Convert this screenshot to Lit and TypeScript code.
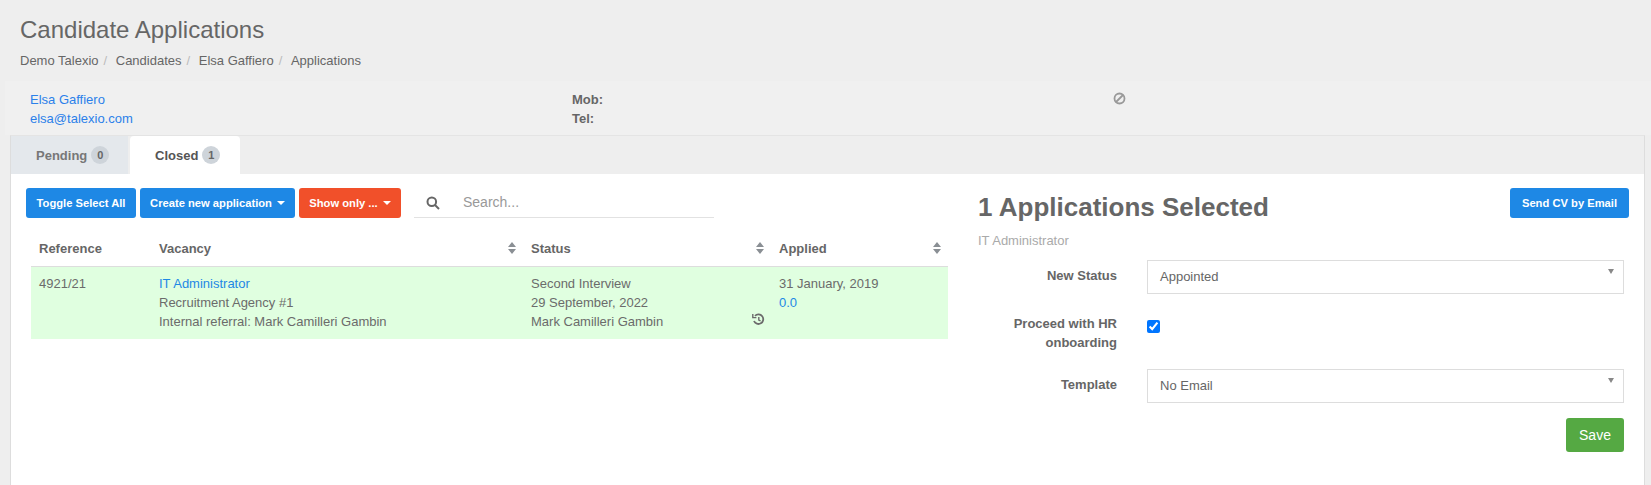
import { LitElement, html, css } from "lit";
import { customElement } from "lit/decorators.js";

const sort = html`<svg class="sort" width="10" height="14" viewBox="0 0 10 14"><path d="M5 1 9 6H1ZM1 8h8L5 13Z" fill="#8a8f94"/></svg>`;
const caret = html`<span class="caret"></span>`;

@customElement("app-root")
export class AppRoot extends LitElement {
  static styles = css`
    :host { display: block; height: 485px; overflow: hidden; background: #eee; font: 13px/19px "Liberation Sans", Arial, sans-serif; color: #666; }
    * { box-sizing: border-box; }
    a { color: #1e88e5; text-decoration: none; }
    header { height: 81px; padding: 16px 0 0 20px; }
    h1 { margin: 0; font-size: 24px; line-height: 28px; font-weight: 400; color: #666; }
    .crumbs { display: flex; margin-top: 7px; color: #666; }
    .crumbs span + span::before { content: "/"; color: #bbb; padding: 0 8.6px 0 5px; }
    .strip { margin-left: 5px; height: 54px; padding: 9px 0 0 25px; background: #f0f0f0; display: grid; grid-template-columns: 542px 541px 1fr; }
    .strip a { color: #2b80ea; }
    .strip b { display: block; color: #666; }
    .ban { margin-top: 2px; display: block; }
    .card { margin: 0 6px 0 10px; background: #fff; border-left: 1px solid #ddd; border-right: 1px solid #ddd; border-top: 1px solid #e4e4e4; height: 350px; }
    .tabs { display: flex; height: 38px; background: #eee; font-weight: 700; }
    .tab { padding: 0 14px 0 25px; display: flex; align-items: center; gap: 4px; height: 38px; color: #777; background: #e4e8ec; width: 117px; }
    .tab.on { background: #fff; color: #555; width: 110px; margin-left: 2px; border-radius: 4px 4px 0 0; }
    .badge { width: 18px; height: 18px; border-radius: 50%; background: #ced4da; font-size: 11px; line-height: 18px; text-align: center; color: #666; }
    .body { display: flex; padding: 14px 0 0 15px; }
    .left { width: 924px; }
    .bar { display: flex; gap: 4px; height: 30px; }
    .btn { display: inline-flex; align-items: center; justify-content: center; border-radius: 3px; background: #1e88e5; color: #fff; font-size: 11.2px; font-weight: 700; height: 30px; white-space: nowrap; }
    .b1 { width: 110px; } .b2 { width: 155px; } .b3 { width: 102px; background: #f1502a; }
    .caret { display: inline-block; margin-left: 5px; border: 4px solid transparent; border-top-color: #fff; border-bottom: 0; }
    .search { width: 300px; margin-left: 9px; border-bottom: 1px solid #e2e2e2; display: flex; align-items: center; gap: 23px; padding-left: 12px; color: #999; font-size: 14px; }
    table { margin: 13px 0 0 5px; border-collapse: collapse; width: 917px; table-layout: fixed; }
    th { height: 35px; text-align: left; padding: 0 6px 0 8px; font-weight: 700; color: #666; border-bottom: 1px solid #ddd; }
    th div { display: flex; justify-content: space-between; align-items: center; }
    td { padding: 7px 8px 8px; vertical-align: top; background: #e0ffe0; color: #6b6b6b; height: 72px; }
    .rel { position: relative; }
    .hist { position: absolute; right: 6px; bottom: 13px; }
    .right { width: 679px; padding-left: 28px; }
    .head { display: flex; justify-content: space-between; height: 30px; }
    h2 { margin: 0; font-size: 26px; line-height: 38px; font-weight: 700; color: #666; }
    .send { width: 119px; }
    .sub { margin-top: 13px; color: #aaa; }
    .form { margin-top: 10px; padding-right: 5px; }
    .row { display: grid; grid-template-columns: 139px 1fr; column-gap: 30px; margin-bottom: 17px; }
    .row.last { margin-bottom: 15px; }
    .row label { text-align: right; font-weight: 700; color: #666; padding-top: 6px; }
    .row label.two { padding-top: 3px; }
    .sel { height: 34px; border: 1px solid #ddd; padding: 6px 12px; position: relative; color: #666; }
    .sel::after { content: ""; position: absolute; right: 9px; top: 8px; border: 3.5px solid transparent; border-top: 5px solid #888; border-bottom: 0; }
    .cb { display: block; margin: 9px 0 0; width: 13px; height: 13px; accent-color: #0075ff; }
    .actions { display: flex; justify-content: flex-end; }
    .save { width: 58px; height: 34px; background: #55a943; font-size: 14px; font-weight: 400; }
  `;

  render() {
    return html`
      <header>
        <h1>Candidate Applications</h1>
        <div class="crumbs"><span>Demo Talexio</span><span>Candidates</span><span>Elsa Gaffiero</span><span>Applications</span></div>
      </header>
      <section class="strip">
        <div><a href="#">Elsa Gaffiero</a><br /><a href="#">elsa@talexio.com</a></div>
        <div><b>Mob:</b><b>Tel:</b></div>
        <svg class="ban" width="13" height="13" viewBox="0 0 13 13" fill="none" stroke="#999" stroke-width="1.8"><circle cx="6.5" cy="6.5" r="5"/><path d="M3 10 10 3"/></svg>
      </section>
      <section class="card">
        <nav class="tabs">
          <div class="tab">Pending <span class="badge">0</span></div>
          <div class="tab on">Closed <span class="badge">1</span></div>
        </nav>
        <div class="body">
          <div class="left">
            <div class="bar">
              <span class="btn b1">Toggle Select All</span>
              <span class="btn b2">Create new application${caret}</span>
              <span class="btn b3">Show only ...${caret}</span>
              <div class="search">
                <svg width="14" height="14" viewBox="0 0 14 14" fill="none" stroke="#666" stroke-width="2"><circle cx="5.8" cy="5.8" r="4.3"/><path d="m9 9 4 4"/></svg>
                <span>Search...</span>
              </div>
            </div>
            <table>
              <colgroup><col style="width:120px"/><col style="width:372px"/><col style="width:248px"/><col /></colgroup>
              <thead><tr>
                <th>Reference</th>
                <th><div>Vacancy ${sort}</div></th>
                <th><div>Status ${sort}</div></th>
                <th><div>Applied ${sort}</div></th>
              </tr></thead>
              <tbody><tr>
                <td>4921/21</td>
                <td><a href="#">IT Administrator</a><br />Recruitment Agency #1<br />Internal referral: Mark Camilleri Gambin</td>
                <td class="rel">Second Interview<br />29 September, 2022<br />Mark Camilleri Gambin
                  <svg class="hist" width="13" height="13" viewBox="0 0 13 13" fill="none" stroke="#6b6b6b" stroke-width="1.8"><path d="M3 2.8A4.8 4.8 0 1 1 2 8"/><path d="M.8 1v3.6h3.6" stroke-width="1.4"/><path d="M6.8 4v3l1.8 1" stroke-width="1.4"/></svg>
                </td>
                <td>31 January, 2019<br /><a href="#">0.0</a></td>
              </tr></tbody>
            </table>
          </div>
          <div class="right">
            <div class="head"><h2>1 Applications Selected</h2><span class="btn send">Send CV by Email</span></div>
            <div class="sub">IT Administrator</div>
            <div class="form">
              <div class="row"><label>New Status</label><div class="sel">Appointed</div></div>
              <div class="row"><label class="two">Proceed with HR onboarding</label><div><input class="cb" type="checkbox" checked /></div></div>
              <div class="row last"><label>Template</label><div class="sel">No Email</div></div>
              <div class="actions"><span class="btn save">Save</span></div>
            </div>
          </div>
        </div>
      </section>
    `;
  }
}
